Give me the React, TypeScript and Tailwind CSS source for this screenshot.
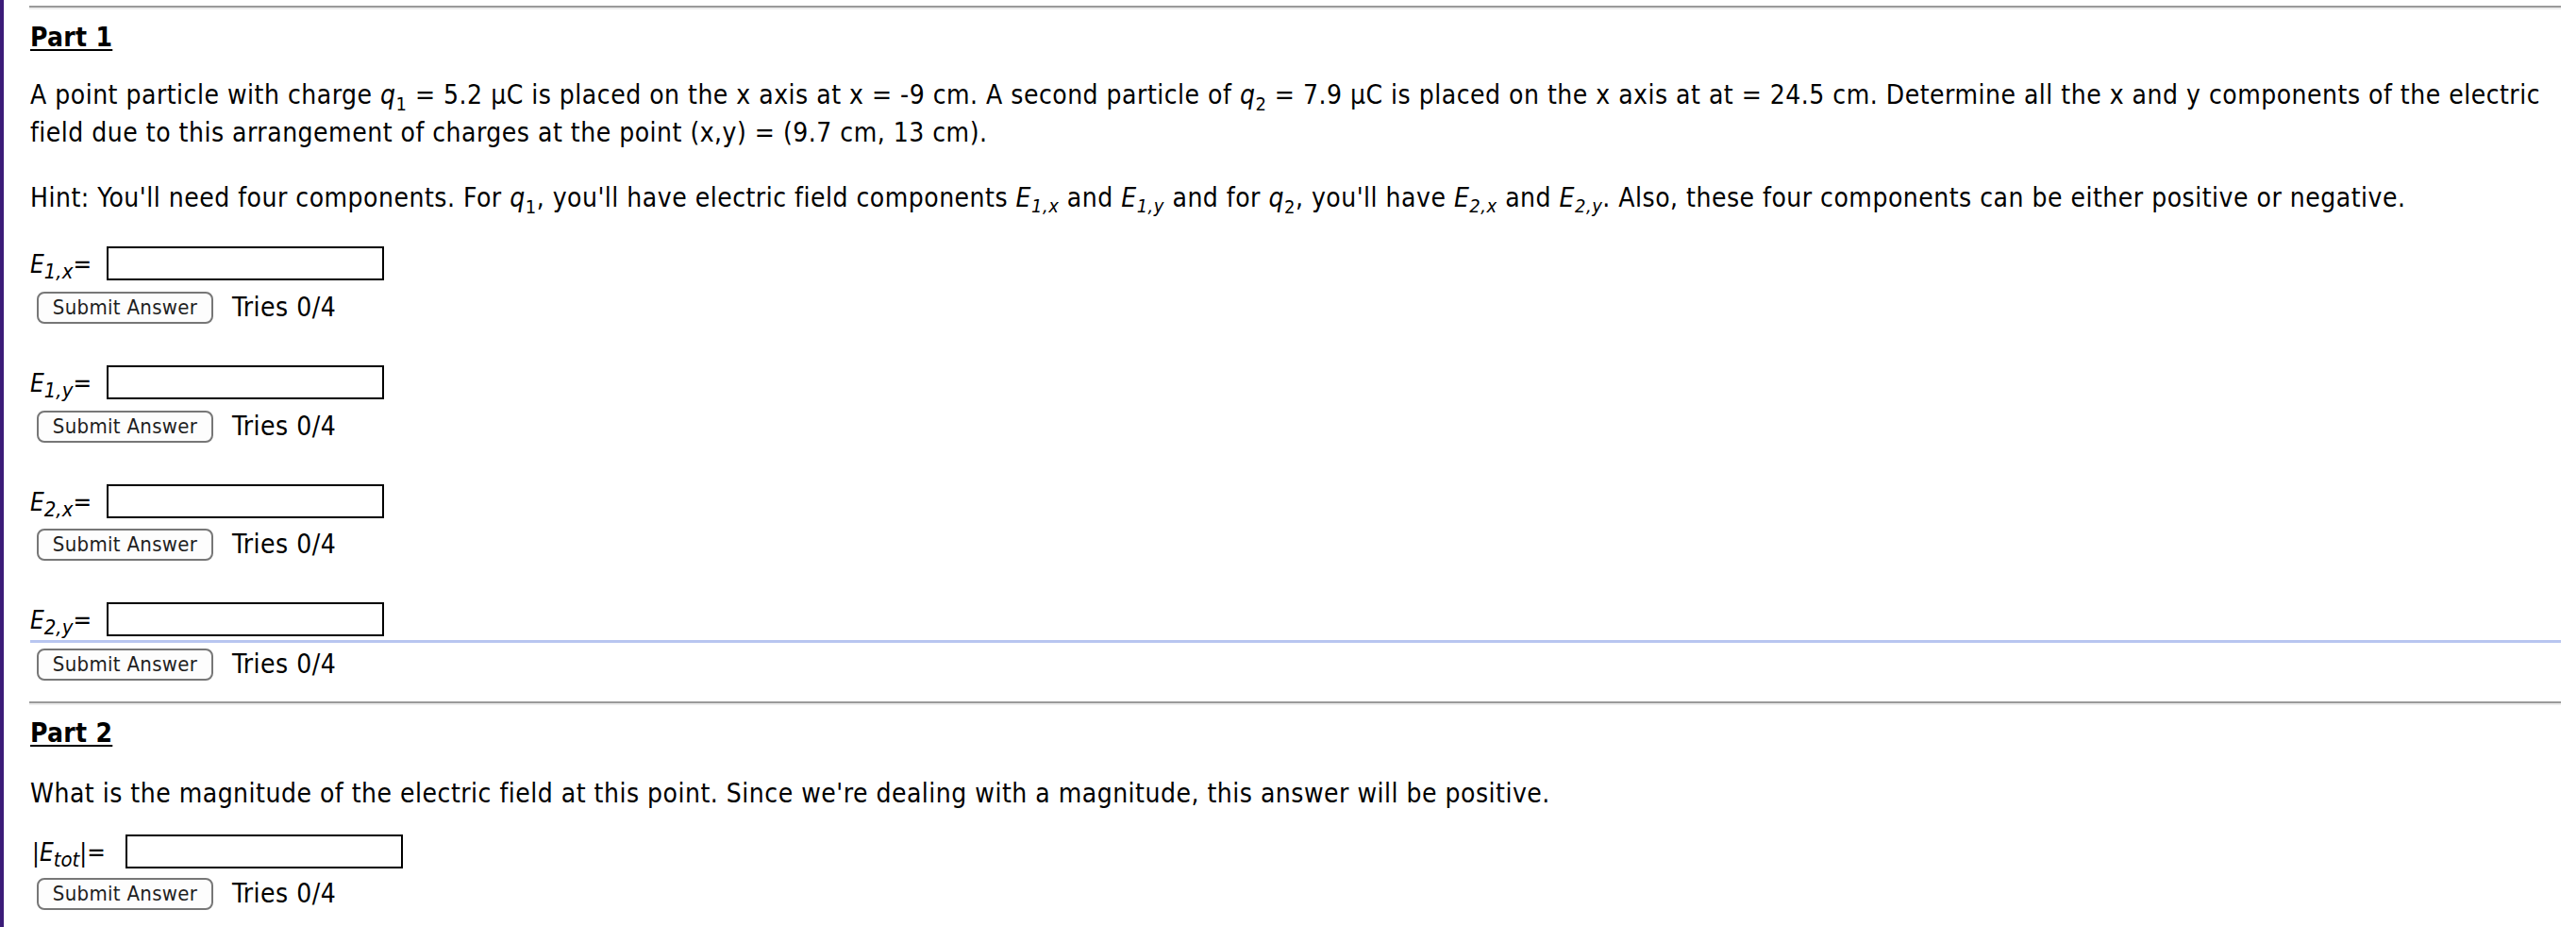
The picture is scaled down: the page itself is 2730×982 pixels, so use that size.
import React from "react";

const font = { fontFamily: '"DejaVu Sans Condensed", "DejaVu Sans", Verdana, sans-serif' };

// italic symbol with an upright lowered subscript (q₁, q₂)
function Sym({ base, sub }: { base: string; sub: string }) {
  return (
    <span className="whitespace-nowrap">
      <i>{base}</i>
      <span className="relative top-[7px] text-[20px] leading-none">{sub}</span>
    </span>
  );
}

// italic symbol with an italic subscript (E₁,ₓ ...)
function ItalicSub({ base, sub, size = "text-[20px]" }: { base: string; sub: string; size?: string }) {
  return (
    <span className="whitespace-nowrap">
      <i>{base}</i>
      <span className={`relative top-[6px] ${size} italic leading-none`}>{sub}</span>
    </span>
  );
}

function SubmitRow() {
  return (
    <div className="flex items-center gap-[20px] pl-[7px]">
      <button
        type="button"
        className="h-[34px] w-[187px] rounded-[8px] border-2 border-[#777] bg-[#fdfdfd] text-[22px] leading-none tracking-[0.3px] text-[#1f1f1f]"
      >
        Submit Answer
      </button>
      <span className="text-[28px] leading-[34px] tracking-[0.5px]">Tries 0/4</span>
    </div>
  );
}

function AnswerBlock({ label, inputLeft }: { label: React.ReactNode; inputLeft: string }) {
  return (
    <div className="flex items-end">
      <div className={`${inputLeft} shrink-0 text-[26px] leading-[34px]`}>{label}</div>
      <input type="text" className="h-[36px] w-[294px] border-2 border-black bg-white outline-none" />
    </div>
  );
}

function Rule() {
  return <div className="border-t-2 border-b-2 border-t-[#9a9a9a] border-b-[#ececec]" />;
}

export default function App() {
  return (
    <div className="min-h-[982px] border-l-4 border-[#3b1c78] bg-white pl-[27px] pr-[16px] text-black" style={font}>
      <div className="pt-[6px]">
        <Rule />
      </div>

      <h2 className="mt-[10px] pl-[1px] text-[28px] font-bold leading-[40px] tracking-[0.3px]">
        <span className="underline decoration-2 underline-offset-[3px]">Part 1</span>
      </h2>

      <p className="mt-[21px] pl-[1px] text-[28px] leading-[40px] tracking-[0.5px]">
        A point particle with charge <Sym base="q" sub="1" /> = 5.2 μC is placed on the x axis at x = -9 cm. A second
        particle of <Sym base="q" sub="2" /> = 7.9 μC is placed on the x axis at at = 24.5 cm. Determine all the x and y
        components of the electric
        <br />
        field due to this arrangement of charges at the point (x,y) = (9.7 cm, 13 cm).
      </p>

      <p className="mt-[29px] pl-[1px] text-[28px] leading-[40px] tracking-[0.5px]">
        Hint: You'll need four components. For <Sym base="q" sub="1" />, you'll have electric field components{" "}
        <ItalicSub base="E" sub="1,x" /> and <ItalicSub base="E" sub="1,y" /> and for <Sym base="q" sub="2" />,
        you'll have <ItalicSub base="E" sub="2,x" /> and <ItalicSub base="E" sub="2,y" />. Also, these four components
        can be either positive or negative.
      </p>

      <div className="mt-[31px] pl-[1px]">
        <AnswerBlock inputLeft="w-[81px]" label={<><ItalicSub base="E" sub="1,x" size="text-[22px]" />=</>} />
        <div className="mt-[12px]">
          <SubmitRow />
        </div>
      </div>

      <div className="mt-[44px] pl-[1px]">
        <AnswerBlock inputLeft="w-[81px]" label={<><ItalicSub base="E" sub="1,y" size="text-[22px]" />=</>} />
        <div className="mt-[12px]">
          <SubmitRow />
        </div>
      </div>

      <div className="mt-[44px] pl-[1px]">
        <AnswerBlock inputLeft="w-[81px]" label={<><ItalicSub base="E" sub="2,x" size="text-[22px]" />=</>} />
        <div className="mt-[11px]">
          <SubmitRow />
        </div>
      </div>

      <div className="mt-[44px] pl-[1px]">
        <div className="border-b-[3px] border-[#b8c6f0] pb-[4px]">
          <AnswerBlock inputLeft="w-[81px]" label={<><ItalicSub base="E" sub="2,y" size="text-[22px]" />=</>} />
        </div>
        <div className="mt-[6px]">
          <SubmitRow />
        </div>
      </div>

      <div className="mt-[22px]">
        <Rule />
      </div>

      <h2 className="mt-[10px] pl-[1px] text-[28px] font-bold leading-[40px] tracking-[0.3px]">
        <span className="underline decoration-2 underline-offset-[3px]">Part 2</span>
      </h2>

      <p className="mt-[24px] pl-[1px] text-[28px] leading-[40px] tracking-[0.5px]">
        What is the magnitude of the electric field at this point. Since we're dealing with a magnitude, this answer will
        be positive.
      </p>

      <div className="mt-[23px] pl-[1px]">
        <AnswerBlock inputLeft="w-[101px] pl-[2px]" label={<>|<ItalicSub base="E" sub="tot" size="text-[22px]" />|=</>} />
        <div className="mt-[10px]">
          <SubmitRow />
        </div>
      </div>
    </div>
  );
}
